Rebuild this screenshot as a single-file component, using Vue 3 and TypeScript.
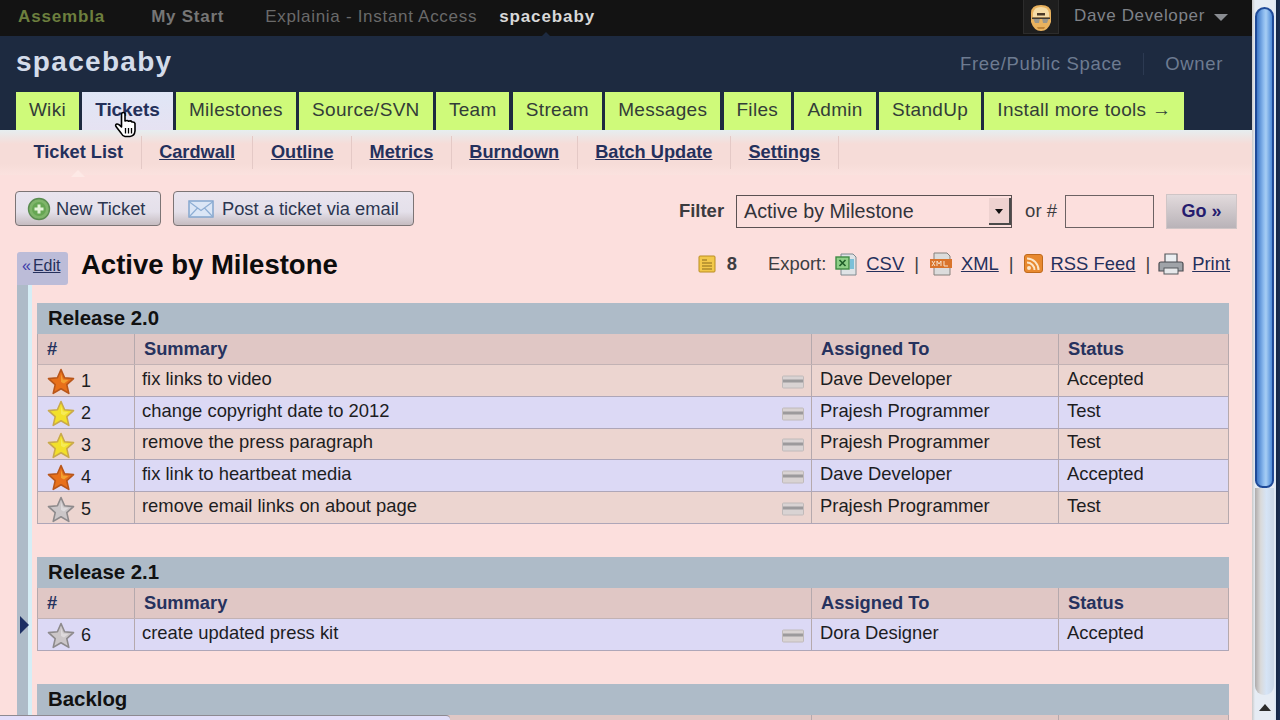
<template>
  <div class="page">
    <div class="main">
      <div class="topbar">
        <nav class="topnav">
          <a class="topnav-item brand">Assembla</a>
          <a class="topnav-item start">My Start</a>
          <a class="topnav-item other">Explainia - Instant Access</a>
          <a class="topnav-item current">spacebaby</a>
        </nav>
        <div class="user">
          <div class="avatar">
            <svg width="30" height="30" viewBox="0 0 30 30">
              <path d="M5 11 Q5 3 15 3 Q25 3 25 11 L25 20 Q22 29 15 29 Q8 29 5 20 Z" fill="#e9b25e" />
              <path d="M7 11 Q8 5 15 5 Q22 5 23 11 L23 15 L7 15 Z" fill="#f5dca6" />
              <rect x="11" y="11" width="8" height="2.5" fill="#4a3a28" />
              <path d="M7 16 L14 16 L13 21 L9 21 Z M16 16 L23 16 L21 21 L17 21 Z" fill="#9a968a" />
              <path d="M6 15.5 H24 V17 H6 Z" fill="#3f3c36" />
              <path d="M11 25 L19 25 L18 27 L12 27 Z" fill="#bf8436" />
            </svg>
          </div>
          <span class="user-name">Dave Developer</span>
          <span class="caret"></span>
        </div>
      </div>

      <header class="spacehead">
        <div class="spacehead-row">
          <div class="space-name">spacebaby</div>
          <div class="space-meta">
            <span>Free/Public Space</span>
            <span class="space-sep"></span>
            <span>Owner</span>
          </div>
        </div>
        <div class="tabs">
          <a v-for="tab in tabs" :key="tab" class="tab" :class="{ active: tab === 'Tickets' }">{{ tab }}</a>
        </div>
      </header>

      <div class="subtabs">
        <a
          v-for="(tab, i) in subtabs"
          :key="tab"
          class="subtab"
          :class="{ selected: i === 0 }"
        >
          <span>{{ tab }}</span>
        </a>
      </div>

      <div class="toolbar">
        <div class="actions">
          <button class="btn new-ticket">
            <svg width="24" height="24" viewBox="0 0 24 24">
              <circle cx="12" cy="12" r="10.5" fill="#7fb56a" stroke="#5a8c50" stroke-width="1.4" />
              <circle cx="12" cy="12" r="7" fill="#66a653" />
              <path d="M12 7.5 V16.5 M7.5 12 H16.5" stroke="#e4f2d8" stroke-width="3" />
            </svg>
            New Ticket
          </button>
          <button class="btn post-ticket">
            <svg width="26" height="20" viewBox="0 0 26 20">
              <rect x="1" y="2" width="24" height="16" fill="#dbe6f6" stroke="#7ea2cc" stroke-width="1.4" />
              <path d="M1.5 3 L13 11.5 L24.5 3 M1.5 17.5 L9.5 9 M24.5 17.5 L16.5 9" fill="none" stroke="#8eaed4" stroke-width="1.2" />
            </svg>
            Post a ticket via email
          </button>
        </div>
        <div class="filter">
          <span class="filter-label">Filter</span>
          <div class="select">
            <span>Active by Milestone</span>
            <span class="select-arrow"></span>
          </div>
          <span class="or">or #</span>
          <input class="num-input" type="text" />
          <button class="go">Go »</button>
        </div>
      </div>

      <div class="heading">
        <div class="edit-tag"><span class="edit-arrows">«</span><a>Edit</a></div>
        <h1>Active by Milestone</h1>
        <div class="meta">
          <svg class="note-icon" width="20" height="18" viewBox="0 0 20 18">
            <rect x="2" y="1" width="16" height="16" rx="1" fill="#f2c84b" stroke="#b98d22" />
            <path d="M5 5 H10 M5 8 H15 M5 11 H15 M5 14 H15" stroke="#8a6a1c" stroke-width="1.2" />
          </svg>
          <b class="count">8</b>
          <span class="export">Export:</span>
          <svg width="24" height="24" viewBox="0 0 24 24">
            <path d="M7 2 H19 L22 5 V23 H7 Z" fill="#dfe3e6" stroke="#7f8a90" />
            <rect x="2" y="5" width="13" height="12" fill="#8fcf88" stroke="#3f8a44" stroke-width="1.4" />
            <path d="M5.5 8 L11.5 14 M11.5 8 L5.5 14" stroke="#1f5c28" stroke-width="1.6" />
            <rect x="16" y="7" width="4" height="10" fill="#7cc0d8" />
          </svg>
          <a>CSV</a>
          <span class="pipe">|</span>
          <svg width="24" height="24" viewBox="0 0 24 24">
            <path d="M5 1 H18 L21 4 V23 H5 Z" fill="#dcdcdc" stroke="#85807c" />
            <rect x="1" y="7" width="22" height="9" fill="#d9742c" />
            <path d="M3 9 L6 14 M6 9 L3 14 M8 14 V9 L10 12 L12 9 V14 M15 9 V14 H19" fill="none" stroke="#f6e2cc" stroke-width="1" />
          </svg>
          <a>XML</a>
          <span class="pipe">|</span>
          <svg width="19" height="19" viewBox="0 0 19 19">
            <rect x="0.5" y="0.5" width="18" height="18" rx="2.5" fill="#e8892f" stroke="#bf6a1c" />
            <circle cx="5" cy="14" r="2" fill="#fbe6c8" />
            <path d="M3 8.5 A7.5 7.5 0 0 1 10.5 16 M3 4.5 A11.5 11.5 0 0 1 14.5 16" fill="none" stroke="#fbe6c8" stroke-width="2" />
          </svg>
          <a>RSS Feed</a>
          <span class="pipe">|</span>
          <svg class="print-icon" width="26" height="24" viewBox="0 0 26 24">
            <path d="M7 10 V2 H19 V10" fill="#eceff2" stroke="#55585c" stroke-width="1.2" />
            <path d="M3 10 H23 Q25 10 25 12 V19 H1 V12 Q1 10 3 10 Z" fill="#9fa3a8" stroke="#4a4d52" stroke-width="1.2" />
            <rect x="6" y="16" width="14" height="6" fill="#e6e8ea" stroke="#55585c" />
          </svg>
          <a>Print</a>
        </div>
      </div>

      <div class="board">
        <div class="rail">
          <span class="rail-arrow"></span>
        </div>
        <div class="groups">
          <section v-for="group in groups" :key="group.name" class="group">
            <div class="group-title">{{ group.name }}</div>
            <div class="row head">
              <!-- Backlog's heads fall below the fold in the screenshot -->
              <div v-for="col in columns" :key="col" class="cell">{{ group.tickets.length ? col : "" }}</div>
            </div>
            <div
              v-for="t in group.tickets"
              :key="t.id"
              class="row ticket"
              :class="t.id % 2 ? 'odd' : 'even'"
            >
              <div class="cell num">
                <svg class="star" width="28" height="27" viewBox="0 0 28 27">
                  <path
                    d="M14 1.5 L17.6 9.7 L26.5 10.6 L19.8 16.6 L21.8 25.4 L14 20.8 L6.2 25.4 L8.2 16.6 L1.5 10.6 L10.4 9.7 Z"
                    :fill="starColors[t.star].fill"
                    :stroke="starColors[t.star].stroke"
                    stroke-width="1.6"
                    stroke-linejoin="round"
                  />
                  <path d="M14 6 L16 11.5 L21.5 12 L17 15.5 L14 14 Z" :fill="starColors[t.star].shine" opacity="0.7" />
                </svg>
                <span>{{ t.id }}</span>
              </div>
              <div class="cell summary">
                <span>{{ t.summary }}</span>
                <svg class="row-icon" width="22" height="14" viewBox="0 0 22 14">
                  <rect x="0.5" y="1" width="21" height="12" rx="1" fill="#d9d3d3" stroke="#c0baba" />
                  <rect x="1" y="4.5" width="20" height="3" fill="#9c9a9c" />
                </svg>
              </div>
              <div class="cell">{{ t.assigned }}</div>
              <div class="cell">{{ t.status }}</div>
            </div>
          </section>
        </div>
      </div>
    </div>

    <div class="scrollbar">
      <div class="thumb"></div>
      <div class="track"></div>
      <div class="scroll-btn"><span></span></div>
    </div>

    <div class="statusbar"></div>

    <svg class="hand" width="26" height="27" viewBox="0 0 26 27">
      <path
        d="M8.5 14 V3.5 Q8.5 1.5 10.3 1.5 Q12 1.5 12 3.5 V10 Q14.5 9 15.5 10.2 Q18 9.4 19 11 Q21.5 10.6 22 12.5 V20 Q21.5 25 17 25.5 H12 Q9.5 25 8 22 L3 15.5 Q2 13.5 3.8 13 Q5.5 12.6 8.5 16 Z"
        fill="#fff"
        stroke="#000"
        stroke-width="1.6"
        stroke-linejoin="round"
      />
      <path d="M12.5 17 V22.5 M15.5 17 V22.5 M18.5 17 V22.5" stroke="#000" stroke-width="1.3" />
    </svg>
  </div>
</template>

<script setup lang="ts">
type Star = "hot" | "normal" | "off";
type Ticket = {
  id: number;
  star: Star;
  summary: string;
  assigned: string;
  status: string;
};

const tabs: string[] = [
  "Wiki",
  "Tickets",
  "Milestones",
  "Source/SVN",
  "Team",
  "Stream",
  "Messages",
  "Files",
  "Admin",
  "StandUp",
  "Install more tools →",
];

const subtabs: string[] = [
  "Ticket List",
  "Cardwall",
  "Outline",
  "Metrics",
  "Burndown",
  "Batch Update",
  "Settings",
];

const columns: string[] = ["#", "Summary", "Assigned To", "Status"];

const starColors = {
  hot: { fill: "#e8701a", stroke: "#b8561a", shine: "#f6b53a" },
  normal: { fill: "#f2e02a", stroke: "#c9a94a", shine: "#f8f06a" },
  off: { fill: "#cbc6c8", stroke: "#8d8a8c", shine: "#e6e2e4" },
};

const groups: { name: string; tickets: Ticket[] }[] = [
  {
    name: "Release 2.0",
    tickets: [
      { id: 1, star: "hot", summary: "fix links to video", assigned: "Dave Developer", status: "Accepted" },
      { id: 2, star: "normal", summary: "change copyright date to 2012", assigned: "Prajesh Programmer", status: "Test" },
      { id: 3, star: "normal", summary: "remove the press paragraph", assigned: "Prajesh Programmer", status: "Test" },
      { id: 4, star: "hot", summary: "fix link to heartbeat media", assigned: "Dave Developer", status: "Accepted" },
      { id: 5, star: "off", summary: "remove email links on about page", assigned: "Prajesh Programmer", status: "Test" },
    ],
  },
  {
    name: "Release 2.1",
    tickets: [
      { id: 6, star: "off", summary: "create updated press kit", assigned: "Dora Designer", status: "Accepted" },
    ],
  },
  { name: "Backlog", tickets: [] },
];
</script>

<style>
html,
body {
  margin: 0;
  overflow: hidden;
}
</style>

<style scoped>
.page {
  position: relative;
  display: flex;
  width: 1280px;
  height: 720px;
  overflow: hidden;
  background: #fcdfdd;
  font-family: "Liberation Sans", Arial, sans-serif;
  color: #222;
}

.main {
  width: 1252px;
  flex: none;
}

/* top black bar */
.topbar {
  display: flex;
  justify-content: space-between;
  height: 36px;
  background: #131313;
}
.topnav {
  display: flex;
  align-items: center;
  padding: 0 0 2px 18px;
  font-size: 17px;
}
.brand {
  color: #6d7f3e;
  font-weight: bold;
  letter-spacing: 0.85px;
}
.start {
  margin-left: 46px;
  color: #767676;
  font-weight: bold;
  letter-spacing: 0.75px;
}
.other {
  margin-left: 41px;
  color: #6a6a6a;
  letter-spacing: 0.7px;
}
.current {
  position: relative;
  margin-left: 22px;
  color: #d8d8d8;
  font-weight: bold;
  letter-spacing: 0.9px;
}
.current::after {
  content: "";
  position: absolute;
  left: 41px;
  bottom: -11px;
  border: 6px solid transparent;
  border-top: 0;
  border-bottom-color: #1d2a40;
}
.user {
  display: flex;
  align-items: center;
  padding-right: 24px;
}
.avatar {
  display: flex;
  align-items: center;
  justify-content: center;
  width: 36px;
  height: 34px;
  box-sizing: border-box;
  background: #1e1e1e;
  border: 1px solid #2c2c2c;
  border-top: 0;
  margin-bottom: 2px;
}
.user-name {
  margin-left: 15px;
  padding-bottom: 4px;
  font-size: 17px;
  letter-spacing: 0.65px;
  color: #7f8288;
}
.caret {
  margin-left: 9px;
  margin-bottom: 2px;
  border: 7px solid transparent;
  border-bottom: 0;
  border-top: 7px solid #8a8d92;
}

/* space header + tools */
.spacehead {
  height: 94px;
  background: #1d2a40;
}
.spacehead-row {
  display: flex;
  justify-content: space-between;
  align-items: center;
  height: 56px;
  padding: 0 29px 4px 16px;
  box-sizing: border-box;
}
.space-name {
  font-size: 28px;
  font-weight: bold;
  letter-spacing: 1.3px;
  color: #d4dcea;
}
.space-meta {
  display: flex;
  align-items: center;
  margin-top: 3px;
  font-size: 18.5px;
  letter-spacing: 0.65px;
  color: #6d7b91;
}
.space-sep {
  width: 1px;
  height: 22px;
  margin: 0 21px;
  background: #2c3a52;
}
.tabs {
  display: flex;
  gap: 3.5px;
  padding-left: 16px;
}
.tab {
  display: flex;
  align-items: center;
  height: 38px;
  padding: 0 12.9px 2px;
  box-sizing: border-box;
  background: #cffa7a;
  font-size: 19px;
  letter-spacing: 0.3px;
  color: #333d38;
}
.tab.active {
  background: linear-gradient(#dfe6f6, #e6e2f2);
  color: #23305a;
  font-weight: bold;
  letter-spacing: -0.1px;
}

/* secondary nav */
.subtabs {
  display: flex;
  align-items: center;
  height: 45px;
  padding: 0 0 0 16px;
  box-sizing: border-box;
  background: linear-gradient(#e6eef0 0, #f6dcd8 14px, #f6dcd8 34px, #fbe2df 100%);
}
.subtab {
  padding: 6px 17.5px;
  border-right: 1px solid #e4c9c6;
  font-size: 18.2px;
  font-weight: bold;
  color: #24305c;
  text-decoration: underline;
}
.subtab.selected {
  position: relative;
  text-decoration: none;
}
.subtab.selected::after {
  content: "";
  position: absolute;
  left: 55px;
  bottom: -8px;
  border: 7px solid transparent;
  border-top: 0;
  border-bottom-color: #fde9e6;
}

/* new ticket / filter */
.toolbar {
  display: flex;
  justify-content: space-between;
  align-items: center;
  height: 40px;
  margin-top: 16px;
  padding: 0 15px;
}
.actions {
  display: flex;
  gap: 12px;
  margin-top: -5px;
}
.btn {
  display: flex;
  align-items: center;
  height: 35px;
  padding: 0;
  border: 1px solid #7c7475;
  border-radius: 4px;
  background: linear-gradient(#e9e4ee, #e4e0ea 60%, #c6bcc0);
  font-family: inherit;
  font-size: 18.3px;
  color: #2c3650;
}
.new-ticket {
  width: 146px;
  gap: 5px;
  padding-left: 11px;
}
.post-ticket {
  width: 241px;
  gap: 8px;
  padding-left: 14px;
}
.filter {
  display: flex;
  align-items: center;
}
.filter-label {
  margin-right: 12px;
  font-size: 18.5px;
  font-weight: bold;
  color: #3b3b3f;
}
.select {
  display: flex;
  justify-content: space-between;
  align-items: center;
  width: 276px;
  height: 33px;
  box-sizing: border-box;
  padding-left: 7px;
  border: 1px solid #5b5152;
  font-size: 19.7px;
  color: #33333a;
}
.select-arrow {
  position: relative;
  width: 22px;
  height: 27px;
  box-sizing: border-box;
  border-right: 2px solid #4a4a4a;
  border-bottom: 2px solid #4a4a4a;
  background: #eed2d0;
}
.select-arrow::after {
  content: "";
  position: absolute;
  left: 6px;
  top: 11px;
  border: 4px solid transparent;
  border-bottom: 0;
  border-top: 5px solid #111;
}
.or {
  margin: 0 8px 0 13px;
  font-size: 18.5px;
  color: #3b3b3f;
}
.num-input {
  width: 89px;
  height: 33px;
  box-sizing: border-box;
  border: 1px solid #6c6263;
  background: transparent;
}
.go {
  width: 71px;
  height: 35px;
  margin-left: 12px;
  padding: 0;
  border: 1px solid #cfc5c6;
  background: linear-gradient(#e2dadc, #b9b3b8);
  font-family: inherit;
  font-size: 18px;
  font-weight: bold;
  color: #251c6e;
}

/* heading */
.heading {
  display: flex;
  align-items: center;
  height: 33px;
  margin-top: 21px;
  padding: 0 22px 0 17px;
}
.edit-tag {
  width: 51px;
  height: 33px;
  box-sizing: border-box;
  padding: 5px 0 0 5px;
  border-radius: 3px 3px 3px 0;
  background: #bcbcd8;
  font-size: 16px;
}
.edit-arrows {
  color: #3c3ca8;
}
.edit-tag a {
  margin-left: 2px;
  color: #25305c;
  text-decoration: underline;
}
h1 {
  margin: 0 0 8px 13px;
  font-size: 27.5px;
  color: #0c0c0c;
}
.meta {
  display: flex;
  align-items: center;
  gap: 8px;
  margin: 0 0 10px auto;
  font-size: 18.4px;
  color: #3d3d42;
}
.meta a {
  color: #25305c;
  text-decoration: underline;
}
.note-icon {
  margin-right: 2px;
}
.count {
  margin-right: 23px;
}
.pipe {
  margin: 0 2px;
}
.print-icon {
  margin-left: -2px;
}

/* ticket tables */
.board {
  display: flex;
  padding-left: 17px;
}
.rail {
  position: relative;
  flex: none;
  width: 11px;
  border-right: 4px solid #d6eef6;
  background: #aebbc8;
  margin-right: 5px;
}
.rail-arrow {
  position: absolute;
  left: 3px;
  top: 331px;
  border: 9px solid transparent;
  border-right: 0;
  border-left: 9px solid #1d2f63;
}
.groups {
  width: 1192px;
  padding-top: 18px;
}
.group {
  margin-bottom: 33px;
}
.group-title {
  display: flex;
  align-items: center;
  height: 31px;
  padding-left: 11px;
  background: #aebbc8;
  font-size: 20.4px;
  font-weight: bold;
  color: #111;
}
.row {
  display: grid;
  grid-template-columns: 96px 677px 247px 168px;
  border-left: 1px solid #b5a9ad;
  border-right: 1px solid #b5a9ad;
  box-sizing: border-box;
}
.head {
  height: 31px;
  background: #e0c7c5;
  border-bottom: 1px solid #c2b2b4;
  font-size: 18.3px;
  font-weight: bold;
  color: #26325e;
}
.ticket {
  height: 31.8px;
  border-bottom: 1px solid #aea6b8;
  font-size: 18.4px;
  color: #1d1d1f;
}
.odd {
  background: #ecd5d0;
}
.even {
  background: #dcd9f5;
}
.cell {
  display: flex;
  align-items: center;
  min-height: 0;
  padding: 0 0 3px 8px;
  border-left: 1px solid #b5a9ad;
  box-sizing: border-box;
}
.cell:first-child {
  border-left: 0;
  padding-left: 9px;
}
.head .cell {
  padding: 0 0 0 9px;
}
.num {
  padding-top: 3px;
  padding-bottom: 0;
  font-size: 18px;
}
.star {
  margin: -2px 6px -2px 0;
  flex: none;
}
.summary {
  justify-content: space-between;
  padding-left: 7px;
  padding-right: 7px;
}
.row-icon {
  margin-top: 6px;
}

/* browser scrollbar */
.scrollbar {
  display: flex;
  flex-direction: column;
  width: 28px;
  flex: none;
  box-sizing: border-box;
  padding-top: 7px;
  background: linear-gradient(90deg, #c9c9c9 0, #e6ecf4 3px, #e6ecf4 22px, #d6e4f4 24px, #152745 24px, #1b2f55 100%);
}
.thumb {
  width: 19px;
  height: 481px;
  margin-left: 3px;
  box-sizing: border-box;
  border: 2px solid #1f4a98;
  border-radius: 10px 10px 8px 8px;
  background: linear-gradient(90deg, #3e78c8, #8fbdf0 45%, #a6cdf4 60%, #4d8ad8);
}
.track {
  flex: 1;
  width: 19px;
  margin-left: 3px;
  border-radius: 0 0 9px 9px;
  background: linear-gradient(90deg, #aeaaaa, #dadada 30%, #d6e4f6 60%, #cbd8e8);
}
.scroll-btn {
  display: flex;
  align-items: center;
  justify-content: center;
  width: 19px;
  height: 25px;
  margin-left: 3px;
}
.scroll-btn span {
  border: 6px solid transparent;
  border-top: 0;
  border-bottom: 7px solid #2c2c2c;
}

/* overlays */
.statusbar {
  position: absolute;
  left: 0;
  bottom: 0;
  width: 450px;
  height: 4px;
  border-top: 1px solid #8d8a92;
  border-top-right-radius: 4px;
  background: #e2defa;
}
.hand {
  position: absolute;
  left: 113px;
  top: 111px;
}
</style>
